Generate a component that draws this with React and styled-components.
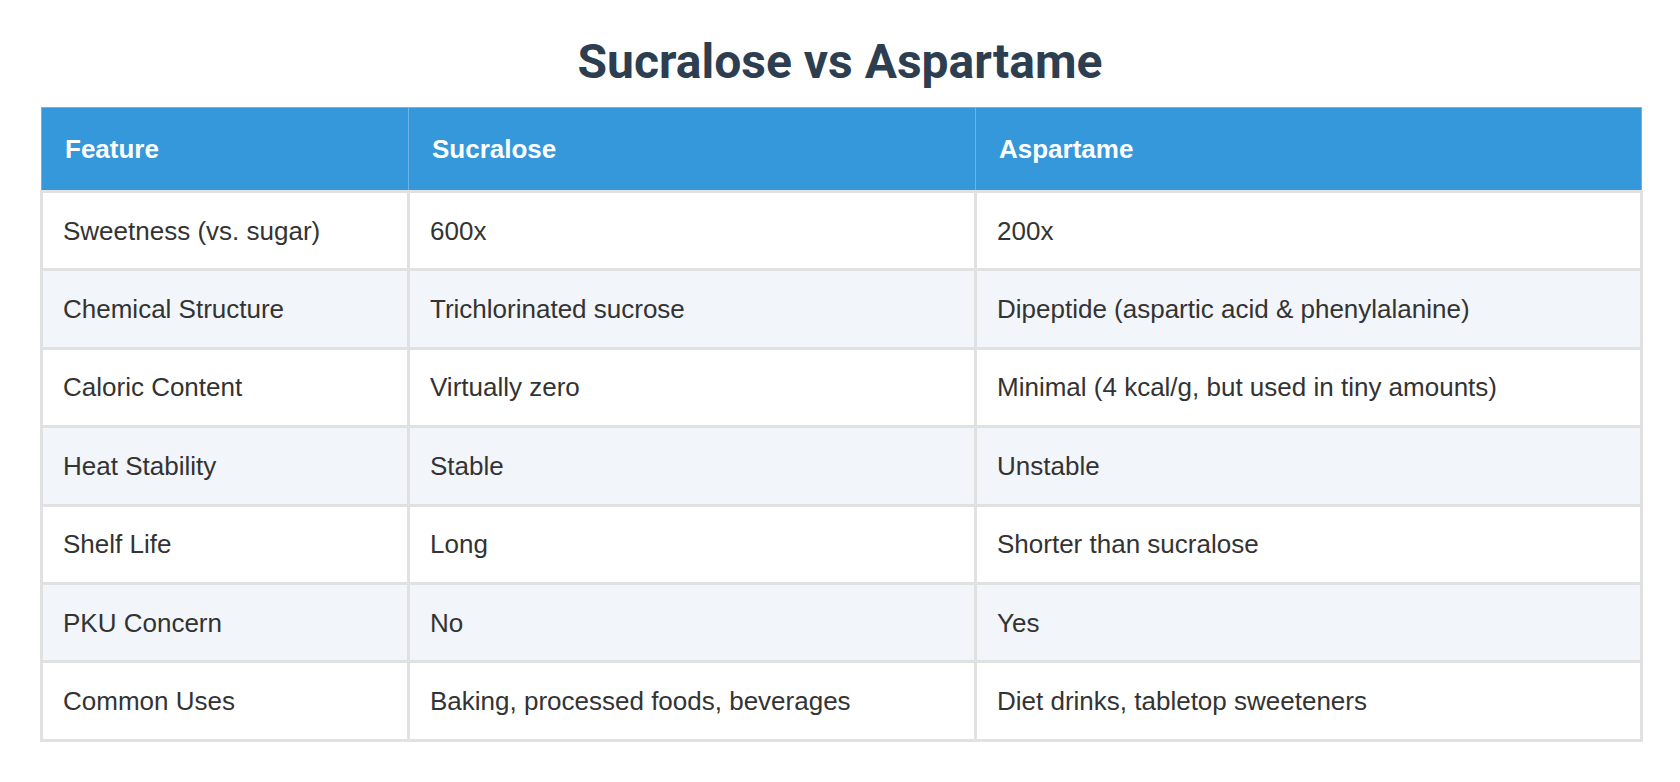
import React from 'react';
import styled, { createGlobalStyle } from 'styled-components';

const GlobalStyle = createGlobalStyle`
  body {
    margin: 0;
    background: #fff;
    font-family: "Liberation Sans", Arial, sans-serif;
  }
`;

const Page = styled.div`
  padding: 33px 40px 0;
`;

const Title = styled.h1`
  margin: 0 0 17px;
  text-align: center;
  font-family: Roboto, "Liberation Sans", sans-serif;
  font-weight: 700;
  font-size: 48px;
  line-height: normal;
  color: #2c3e50;
`;

const Table = styled.table`
  width: 1600px;
  border-collapse: collapse;
  table-layout: fixed;
`;

const Col = styled.col`
  width: ${(p) => p.$w}px;
`;

const HeadCell = styled.th`
  background: #3498db;
  color: #fff;
  text-align: left;
  font-weight: 700;
  font-size: 26px;
  line-height: 30px;
  padding: 26px 23px;
  border: 1px solid #6cb4e6;
`;

const Row = styled.tr`
  background: ${(p) => (p.$even ? '#f2f5fa' : '#fff')};
`;

const Cell = styled.td`
  color: #333;
  font-size: 26px;
  line-height: 30px;
  padding: 22.7px 20px;
  border: 3px solid #e1e1e1;
  white-space: nowrap;
`;

const rows = [
  ['Sweetness (vs. sugar)', '600x', '200x'],
  ['Chemical Structure', 'Trichlorinated sucrose', 'Dipeptide (aspartic acid & phenylalanine)'],
  ['Caloric Content', 'Virtually zero', 'Minimal (4 kcal/g, but used in tiny amounts)'],
  ['Heat Stability', 'Stable', 'Unstable'],
  ['Shelf Life', 'Long', 'Shorter than sucralose'],
  ['PKU Concern', 'No', 'Yes'],
  ['Common Uses', 'Baking, processed foods, beverages', 'Diet drinks, tabletop sweeteners'],
];

const App = () => {
  return (
    <Page>
      <GlobalStyle />
      <Title>Sucralose vs Aspartame</Title>
      <Table>
        <colgroup>
          <Col $w={367} />
          <Col $w={567} />
          <Col $w={666} />
        </colgroup>
        <thead>
          <tr>
            <HeadCell>Feature</HeadCell>
            <HeadCell>Sucralose</HeadCell>
            <HeadCell>Aspartame</HeadCell>
          </tr>
        </thead>
        <tbody>
          {rows.map((r, i) => (
            <Row key={r[0]} $even={i % 2 === 1}>
              {r.map((c) => (
                <Cell key={c}>{c}</Cell>
              ))}
            </Row>
          ))}
        </tbody>
      </Table>
    </Page>
  );
};

export default App;
